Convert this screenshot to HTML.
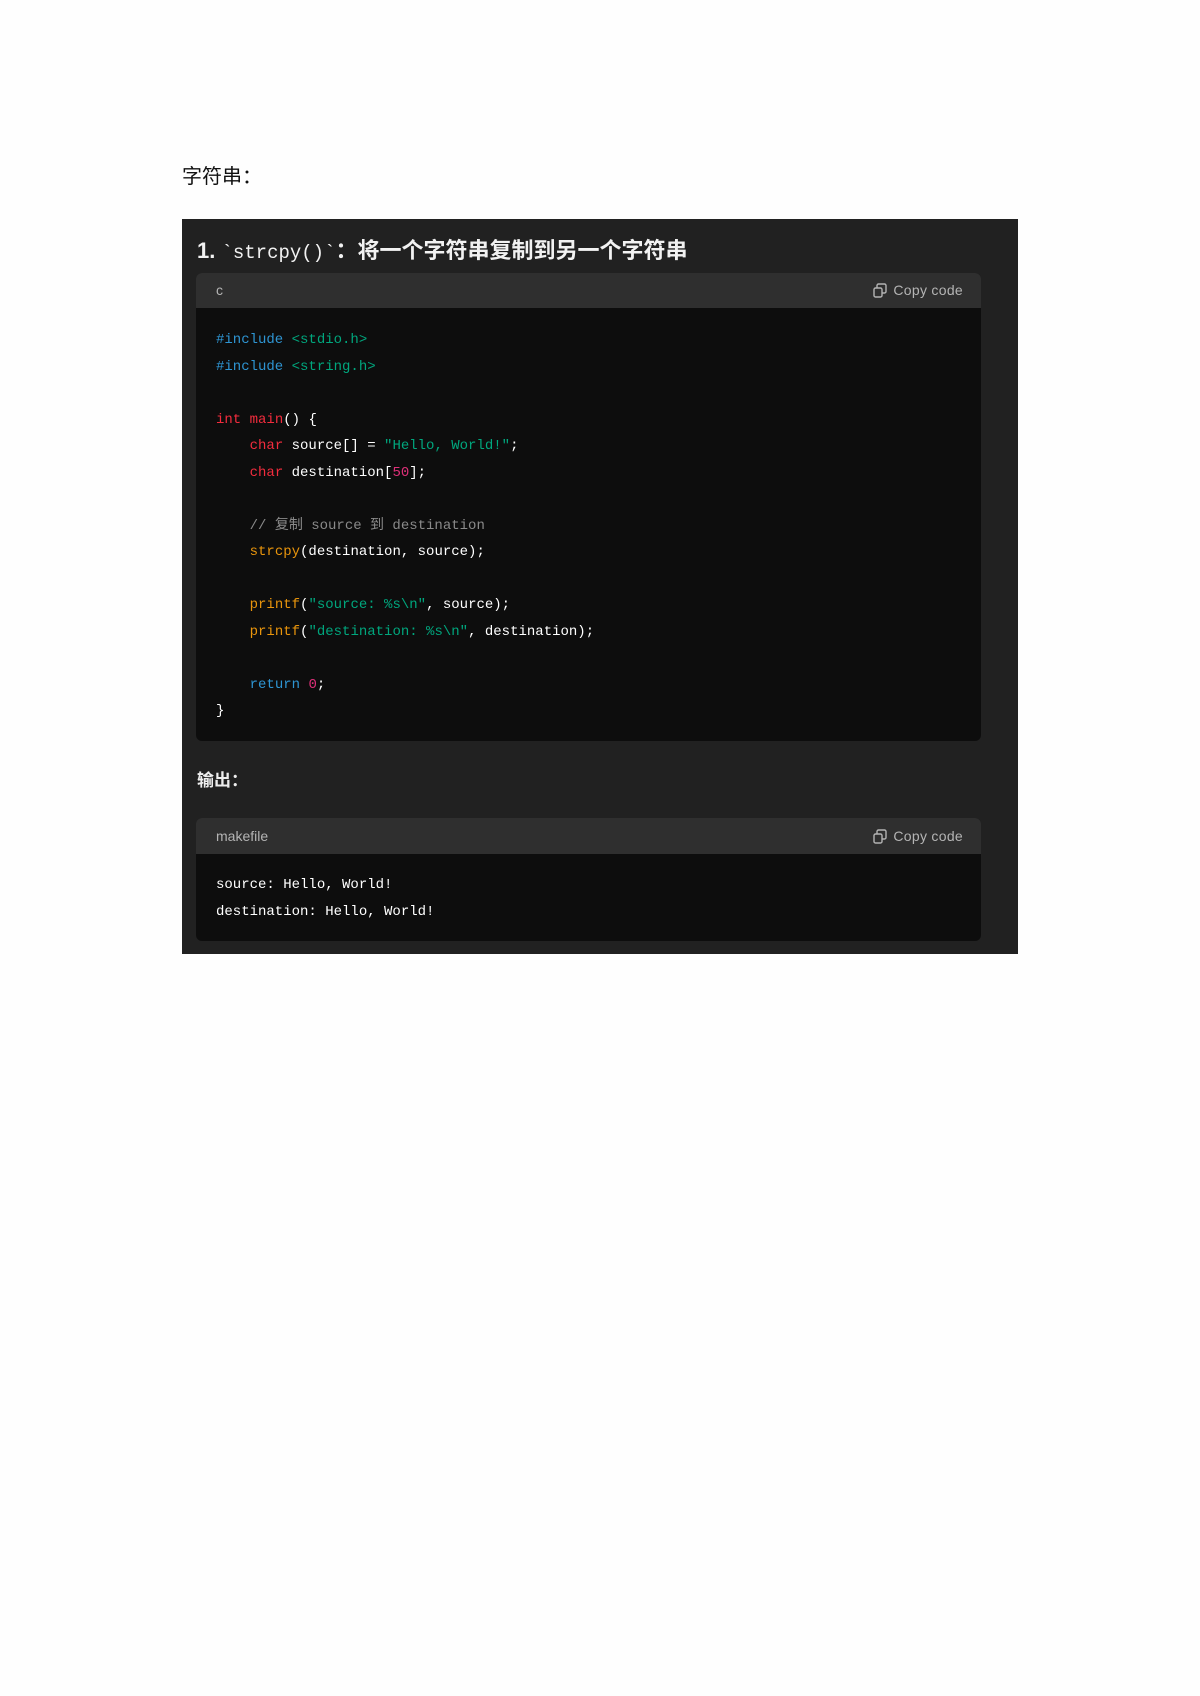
<!DOCTYPE html>
<html><head><meta charset="utf-8"><style>
body{margin:0;background:#fefefe;width:1200px;height:1696px;position:relative;font-family:"Liberation Sans","Noto Sans CJK SC",sans-serif;}
.t{position:absolute;left:182px;top:160px;font-size:20px;color:#111;}
.box{position:absolute;left:182px;top:219px;width:836px;height:735px;background:#212121;}
h1{position:absolute;left:15px;top:14px;margin:0;font-size:22px;color:#f2f2f2;font-weight:bold;}
h1 code{font-family:"Liberation Mono",monospace;font-weight:normal;font-size:19px;}
.cb{position:absolute;left:14px;width:785px;background:#0d0d0d;border-radius:6px;overflow:hidden;}
.hd{height:35px;background:#2f2f2f;color:#b4b4b4;font-size:14px;line-height:35px;padding:0 20px;position:relative;}
.cp{position:absolute;right:18px;top:0;letter-spacing:0.3px}
.cp svg{vertical-align:-3px;margin-right:6px}
pre{margin:0;padding:19px 20px;font-family:"Liberation Mono",monospace;font-size:14px;line-height:26.5px;color:#fff;}
.k{color:#2e95d3}.s{color:#00a67d}.r{color:#f22c3d}.o{color:#e9950c}.n{color:#df3079}.c{color:#8a8a8a}
.out{position:absolute;left:15px;top:547px;font-size:17px;color:#eee;font-weight:bold}
</style></head><body>
<div class="t">字符串：</div>
<div class="box">
<h1>1. <code>`strcpy()`</code>：将一个字符串复制到另一个字符串</h1>
<div class="cb" style="top:54px;height:468px">
<div class="hd">c<span class="cp"><svg width="14" height="15" viewBox="0 0 14 15" fill="none" stroke="#b4b4b4" stroke-width="1.4"><rect x="1" y="5" width="8" height="9" rx="1.5"/><path d="M4 5V2.5A1.5 1.5 0 0 1 5.5 1h6A1.5 1.5 0 0 1 13 2.5v6a1.5 1.5 0 0 1-1.5 1.5H9"/></svg>Copy code</span></div>
<pre><span class="k">#include</span> <span class="s">&lt;stdio.h&gt;</span>
<span class="k">#include</span> <span class="s">&lt;string.h&gt;</span>

<span class="r">int</span> <span class="r">main</span>() {
    <span class="r">char</span> source[] = <span class="s">"Hello, World!"</span>;
    <span class="r">char</span> destination[<span class="n">50</span>];

    <span class="c">// 复制 source 到 destination</span>
    <span class="o">strcpy</span>(destination, source);

    <span class="o">printf</span>(<span class="s">"source: %s\n"</span>, source);
    <span class="o">printf</span>(<span class="s">"destination: %s\n"</span>, destination);

    <span class="k">return</span> <span class="n">0</span>;
}</pre>
</div>
<div class="out">输出：</div>
<div class="cb" style="top:599px;height:123px">
<div class="hd" style="height:36px;line-height:36px">makefile<span class="cp"><svg width="14" height="15" viewBox="0 0 14 15" fill="none" stroke="#b4b4b4" stroke-width="1.4"><rect x="1" y="5" width="8" height="9" rx="1.5"/><path d="M4 5V2.5A1.5 1.5 0 0 1 5.5 1h6A1.5 1.5 0 0 1 13 2.5v6a1.5 1.5 0 0 1-1.5 1.5H9"/></svg>Copy code</span></div>
<pre style="padding-top:18px">source: Hello, World!
destination: Hello, World!</pre>
</div>
</div>
</body></html>
